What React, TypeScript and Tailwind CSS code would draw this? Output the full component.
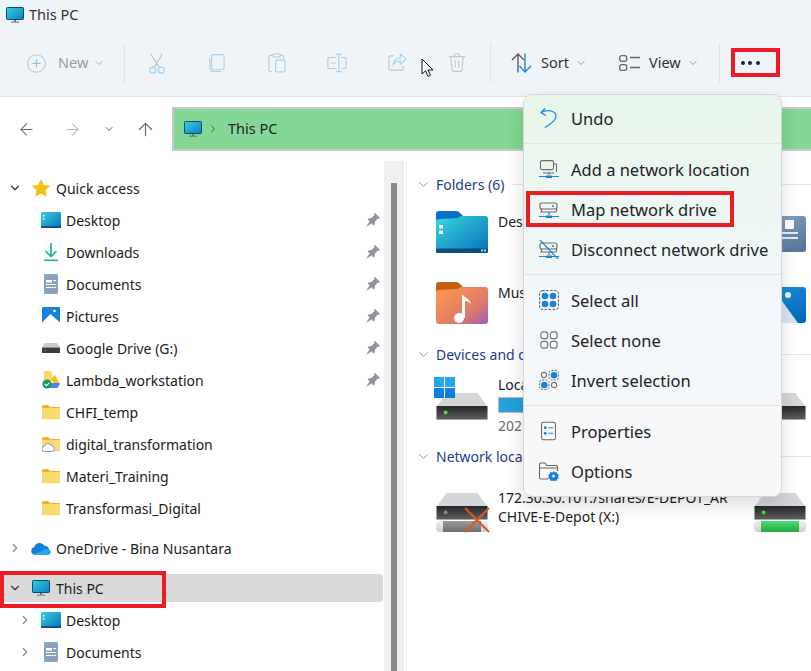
import { ArrowLeft, ArrowRight, ArrowUp, ChevronDown, ChevronRight } from "lucide-react";

function Monitor({ className = "" }: { className?: string }) {
  return (
    <svg viewBox="0 0 18 16" className={className}>
      <defs>
        <linearGradient id="mon" x1="0" y1="0" x2="1" y2="1">
          <stop offset="0" stopColor="#35cfe0" />
          <stop offset="1" stopColor="#0a7fc0" />
        </linearGradient>
      </defs>
      <rect x="0.5" y="0.5" width="17" height="12" rx="0.8" fill="url(#mon)" stroke="#0b4c6e" />
      <rect x="8" y="13" width="2" height="1.6" fill="#5b6b76" />
      <rect x="5" y="14.6" width="8" height="1" fill="#5b6b76" />
    </svg>
  );
}

function DesktopFolder({ className = "" }: { className?: string }) {
  return (
    <svg viewBox="0 0 52 42" className={className}>
      <defs>
        <linearGradient id="deskf" x1="0" y1="0" x2="1" y2="1">
          <stop offset="0" stopColor="#3ad6e0" />
          <stop offset="1" stopColor="#0670b8" />
        </linearGradient>
      </defs>
      <path d="M0 3a3 3 0 0 1 3-3h17a5 5 0 0 1 4 2l3 3v8H0z" fill="#0670c8" />
      <path d="M0 10a3 3 0 0 1 3-2l19-1 3-2h24a3 3 0 0 1 3 3v31a3 3 0 0 1-3 3H3a3 3 0 0 1-3-3z" fill="url(#deskf)" />
      <rect x="0" y="37.5" width="52" height="4.5" rx="1.5" fill="#0c4f78" />
      <rect x="3" y="14" width="4" height="3.5" fill="#e8f8fb" />
      <rect x="3" y="19.5" width="4" height="3.5" fill="#e8f8fb" />
      <rect x="45" y="38.5" width="2" height="2" fill="#b8d8e8" />
      <rect x="48" y="38.5" width="2" height="2" fill="#b8d8e8" />
    </svg>
  );
}

function MusicFolder({ className = "" }: { className?: string }) {
  return (
    <svg viewBox="0 0 52 42" className={className}>
      <defs>
        <linearGradient id="musf" x1="0" y1="0" x2="1" y2="1">
          <stop offset="0" stopColor="#ff9a4a" />
          <stop offset="0.65" stopColor="#df7a68" />
          <stop offset="1" stopColor="#9a62b8" />
        </linearGradient>
      </defs>
      <path d="M0 3a3 3 0 0 1 3-3h17a5 5 0 0 1 4 2l3 3v8H0z" fill="#c06010" />
      <path d="M0 10a3 3 0 0 1 3-2l19-1 3-2h24a3 3 0 0 1 3 3v31a3 3 0 0 1-3 3H3a3 3 0 0 1-3-3z" fill="url(#musf)" />
      <circle cx="23" cy="36" r="5" fill="#fff" />
      <path d="M26 36V12c2 4 8 4 9 10-3-3-5-3-6-3v17z" fill="#fff" />
    </svg>
  );
}

function DocFolder({ className = "" }: { className?: string }) {
  return (
    <svg viewBox="0 0 52 42" className={className}>
      <defs>
        <linearGradient id="docf" x1="0" y1="0" x2="1" y2="1">
          <stop offset="0" stopColor="#9ab3cc" />
          <stop offset="1" stopColor="#4f7096" />
        </linearGradient>
      </defs>
      <rect x="0" y="6" width="52" height="36" rx="3" fill="url(#docf)" />
      <rect x="31" y="10" width="9" height="9" rx="1" fill="#fff" />
      <rect x="28" y="22" width="16" height="2" fill="#e8eef5" />
      <rect x="28" y="27" width="16" height="2" fill="#e8eef5" />
    </svg>
  );
}

function PicFolder({ className = "" }: { className?: string }) {
  return (
    <svg viewBox="0 0 52 42" className={className}>
      <defs>
        <linearGradient id="picf" x1="0" y1="0" x2="1" y2="1">
          <stop offset="0" stopColor="#29a0e4" />
          <stop offset="1" stopColor="#0062b8" />
        </linearGradient>
      </defs>
      <rect x="0" y="6" width="52" height="36" rx="3" fill="url(#picf)" />
      <circle cx="34" cy="14" r="3" fill="#e8f4fb" />
      <path d="M12 42L28 20l16 22z" fill="#d8e4f8" />
    </svg>
  );
}

function BigDrive({ className = "", led = "#3ae23a" }: { className?: string; led?: string }) {
  return (
    <svg viewBox="0 0 54 27" preserveAspectRatio="none" className={className}>
      <defs>
        <linearGradient id="bigd" x1="0" y1="0" x2="0" y2="1">
          <stop offset="0" stopColor="#262626" />
          <stop offset="1" stopColor="#5c5c5c" />
        </linearGradient>
      </defs>
      <path d="M11 0h32l10 13H1z" fill="#d4d6da" />
      <rect x="0.5" y="13" width="53" height="13" fill="url(#bigd)" />
      <rect x="0.5" y="26" width="53" height="1" fill="#a8a8a8" />
      <circle cx="10" cy="19.500" r="2" fill={led} />
    </svg>
  );
}

function WinLocal({ className = "" }: { className?: string }) {
  return (
    <div className={`relative ${className}`}>
      <BigDrive className="absolute left-0 top-[16px] w-[52px] h-[27px]" />
      <svg viewBox="0 0 21 21" className="absolute left-[-2px] top-0 w-[21px] h-[21px]">
        <rect width="10" height="10" fill="#22a6ec" />
        <rect x="11" width="10" height="10" fill="#22a6ec" />
        <rect y="11" width="10" height="10" fill="#0b80dc" />
        <rect x="11" y="11" width="10" height="10" fill="#0b80dc" />
      </svg>
    </div>
  );
}

function NetDrive({ className = "", broken = false }: { className?: string; broken?: boolean }) {
  return (
    <div className={`relative ${className}`}>
      <BigDrive className="absolute left-0 top-0 w-[52px] h-[27px]" led={broken ? "#8a8a8a" : "#3ae23a"} />
      <div className="absolute left-0 top-[28px] h-[11px] w-[52px] rounded-sm bg-gradient-to-b from-[#f0f0f0] to-[#cfcfcf]" />
      <div className={`absolute left-[7px] top-[28px] h-[11px] w-[38px] bg-gradient-to-b ${broken ? "from-[#9a9a9a] to-[#6f6f6f]" : "from-[#4fdc72] to-[#1fa844]"}`} />
      {broken && (
        <svg viewBox="0 0 26 26" className="absolute left-[28px] top-[14px] w-[26px] h-[26px]">
          <path d="M1 1l24 24M25 1L1 25" stroke="#d9562a" strokeWidth="2.2" />
        </svg>
      )}
    </div>
  );
}

function SmallDesktop() {
  return (
    <svg viewBox="0 0 20 16" className="w-[20px] h-[16px]">
      <defs>
        <linearGradient id="sdesk" x1="0" y1="0" x2="1" y2="1">
          <stop offset="0" stopColor="#38d2e0" />
          <stop offset="1" stopColor="#0670b8" />
        </linearGradient>
      </defs>
      <rect width="20" height="16" rx="1.5" fill="url(#sdesk)" />
      <rect y="14.2" width="20" height="1.8" fill="#0c4f78" />
      <rect x="2" y="3" width="1.5" height="1.5" fill="#fff" />
      <rect x="2" y="6" width="1.5" height="1.5" fill="#fff" />
    </svg>
  );
}

function SmallDownload() {
  return (
    <svg viewBox="0 0 20 20" className="w-[20px] h-[20px]">
      <path d="M10 1v13M4.5 9l5.5 5.5L15.5 9" stroke="#1cb597" strokeWidth="1.7" fill="none" />
      <rect x="3" y="17.5" width="14" height="1.6" fill="#1cb597" />
    </svg>
  );
}

function SmallDoc() {
  return (
    <svg viewBox="0 0 20 20" className="w-[20px] h-[20px]">
      <rect x="3" y="0" width="14" height="20" rx="1.2" fill="#8ba3bf" />
      <rect x="5" y="6" width="6" height="2.5" fill="#fff" />
      <rect x="12" y="6" width="3" height="1" fill="#fff" />
      <rect x="5" y="10" width="10" height="1" fill="#fff" />
      <rect x="5" y="13" width="10" height="1" fill="#fff" />
    </svg>
  );
}

function SmallPic() {
  return (
    <svg viewBox="0 0 18 18" className="w-[18px] h-[18px]">
      <rect width="18" height="18" rx="1.2" fill="#1583dc" />
      <circle cx="12.5" cy="4" r="1.3" fill="#fff" />
      <path d="M0 15.5L8.5 7l9.5 8.5V18H0z" fill="#fff" />
    </svg>
  );
}

function SmallDrive() {
  return (
    <svg viewBox="0 0 18 10" className="w-[18px] h-[10px]">
      <path d="M3 0h12l3 4.5H0z" fill="#c9cbce" />
      <rect y="4.5" width="18" height="5.5" fill="#3c3c3c" />
      <rect x="3" y="7" width="1" height="1" fill="#40e040" />
    </svg>
  );
}

function SmallFolder({ cloud = false }: { cloud?: boolean }) {
  return (
    <svg viewBox="0 0 18 16" className="w-[18px] h-[16px]">
      <path d="M0 2a1 1 0 0 1 1-1h5l2 2h9a1 1 0 0 1 1 1v3H0z" fill="#f0b429" />
      <path d="M0 4h18v10.5a.8.8 0 0 1-.8.8H.8a.8.8 0 0 1-.8-.8z" fill="#fcd970" />
      {cloud && (
        <path d="M2.5 15.5a2.5 2.5 0 0 1-.2-5 3.8 3.8 0 0 1 7.2-.7 2.9 2.9 0 0 1 .8 5.7z" fill="#fff" stroke="#6d94d8" strokeWidth="1" />
      )}
    </svg>
  );
}

function SmallLambda() {
  return (
    <svg viewBox="0 0 18 18" className="w-[18px] h-[18px]">
      <path d="M2 0h6l2 2v8H2z" fill="#fcd970" />
      <path d="M9 8l4-4 5 10h-5z" fill="#fbbc04" />
      <path d="M6 17l3-5h9l-2.5 5z" fill="#4285f4" />
      <circle cx="5" cy="13" r="4.6" fill="#1a9b54" />
      <path d="M2.8 13l1.7 1.7 3-3" stroke="#fff" strokeWidth="1.2" fill="none" />
    </svg>
  );
}

function Star() {
  return (
    <svg viewBox="0 0 20 20" className="w-[20px] h-[20px]">
      <path d="M10 1l2.8 6 6.5.8-4.8 4.4 1.3 6.5L10 15.4l-5.8 3.3 1.3-6.5L.7 7.8 7.2 7z" fill="#f9bf11" />
    </svg>
  );
}

function Cloud() {
  return (
    <svg viewBox="0 0 21 13" className="w-[21px] h-[13px]">
      <path d="M4 13a4 4 0 0 1-.6-7.900 6 6 0 0 1 10.800-1.600A4.600 4.600 0 0 1 19 8a2.800 2.800 0 0 1-1 5z" fill="#1480d8" />
      <path d="M4 13h14a2.800 2.800 0 0 0 1.500-5.200c-3-2-7 0-9 2.200-1.800-.6-4.500.6-6.500 3z" fill="#28a8ea" />
    </svg>
  );
}

function Pin() {
  return (
    <svg viewBox="0 0 14 14" className="w-[14px] h-[14px]">
      <path d="M9 0l5 5-1.200 1-1-.4L9 8.400l-.4 3-1 1L1.600 6.400l1-1 3-.4 2.800-2.800-.4-1zM3.500 8.500L0 14l5.500-3.500z" fill="#8d959c" />
    </svg>
  );
}

function Cut() {
  return (
    <svg viewBox="0 0 20 22" className="w-[19px] h-[21px]" fill="none">
      <path d="M3 1l8.500 14M15 1L6.500 15" stroke="#bdbdbd" strokeWidth="1.100" />
      <circle cx="5" cy="18" r="3.200" stroke="#a5d2f3" strokeWidth="1.300" />
      <circle cx="14" cy="18" r="3.200" stroke="#a5d2f3" strokeWidth="1.300" />
    </svg>
  );
}

function Copy() {
  return (
    <svg viewBox="0 0 18 20" className="w-[16px] h-[20px]" fill="none">
      <rect x="3" y="0.600" width="14" height="17" rx="2.400" stroke="#a5d2f3" strokeWidth="1.200" />
      <path d="M1 4v12a3.500 3.500 0 0 0 3.500 3.500h9" stroke="#c4c4c4" strokeWidth="1.200" />
    </svg>
  );
}

function Paste() {
  return (
    <svg viewBox="0 0 19 20" className="w-[18px] h-[20px]" fill="none">
      <path d="M4 19H2.500A1.500 1.500 0 0 1 1 17.500v-14A1.500 1.500 0 0 1 2.500 2H15a1.500 1.500 0 0 1 1.500 1.500V6" stroke="#c4c4c4" strokeWidth="1.200" />
      <rect x="5" y="0.600" width="8" height="3" rx="1.200" stroke="#c4c4c4" strokeWidth="1.100" fill="#eff4f9" />
      <rect x="8" y="7" width="10" height="12.400" rx="1.600" stroke="#a5d2f3" strokeWidth="1.200" />
    </svg>
  );
}

function Rename() {
  return (
    <svg viewBox="0 0 22 20" className="w-[20px] h-[20px]" fill="none">
      <path d="M10 4H2.500A1.500 1.500 0 0 0 1 5.500v9A1.500 1.500 0 0 0 2.500 16H10M16 4h3.500A1.500 1.500 0 0 1 21 5.500v9a1.500 1.500 0 0 1-1.500 1.500H16" stroke="#c4c4c4" strokeWidth="1.200" />
      <path d="M10 0.600h6M13 0.600v18.800M10 19.400h6M4 10h6" stroke="#a5d2f3" strokeWidth="1.300" />
    </svg>
  );
}

function Share() {
  return (
    <svg viewBox="0 0 20 20" className="w-[19px] h-[19px]" fill="none">
      <path d="M6 3H2.500A1.500 1.500 0 0 0 1 4.500v12A1.500 1.500 0 0 0 2.500 18h12a1.500 1.500 0 0 0 1.500-1.500V14" stroke="#c4c4c4" strokeWidth="1.200" />
      <path d="M13 1l6 5.500-6 5.500V8.500c-3.500 0-6 1-7.500 4 .2-4.500 3-7 7.500-7.500z" stroke="#a5d2f3" strokeWidth="1.200" />
    </svg>
  );
}

function Trash() {
  return (
    <svg viewBox="0 0 20 21" className="w-[18px] h-[19px]" fill="none" stroke="#c4c4c4" strokeWidth="1.200">
      <path d="M1 4h18M7 4l1-3h4l1 3M3 4l1.500 15a1.500 1.500 0 0 0 1.500 1.400h8a1.500 1.500 0 0 0 1.500-1.400L17 4M8 8v8M12 8v8" />
    </svg>
  );
}

function Sort() {
  return (
    <svg viewBox="0 0 21 20" className="w-[21px] h-[20px]" fill="none" strokeWidth="1.400">
      <path d="M7 19.500V1M1 7l6-6 6 6" stroke="#5c5c5c" />
      <path d="M14 0.500V19M8.500 13l5.500 6 6-6" stroke="#1f86dc" />
    </svg>
  );
}

function ViewIcon() {
  return (
    <svg viewBox="0 0 21 16" className="w-[21px] h-[16px]" fill="none" stroke="#666" strokeWidth="1.300">
      <rect x="0.700" y="0.700" width="7" height="5.600" rx="2" />
      <rect x="0.700" y="9.700" width="7" height="5.600" rx="2" />
      <path d="M11 2.500h10M11 12.500h10" />
    </svg>
  );
}

function Cursor() {
  return (
    <svg viewBox="0 0 13 20" className="absolute left-[421px] top-[58px] w-[13px] h-[20px]">
      <path d="M1 1v15l3.500-3.200L7 18.500l2.500-1.200L7 12h5z" fill="#fff" stroke="#111" strokeWidth="1" />
    </svg>
  );
}

function NetBase() {
  return <path d="M0 16.500h7M13 16.500h7M10 12v3" stroke="#1f86dc" strokeWidth="1.200" fill="none" />;
}

function MenuIcon({ name }: { name: string }) {
  const gray = "#6b6b6b";
  const blue = "#1a80d8";
  if (name === "undo") {
    return (
      <svg viewBox="0 0 18 20" className="w-[18px] h-[20px]" fill="none" stroke="#2a8ce0" strokeWidth="1.300">
        <path d="M5 0.500L1 4.500l5 3M1 4.500c6-3.500 15-2 15 4 0 3-3 6-11 11" />
      </svg>
    );
  }
  if (name === "add") {
    return (
      <svg viewBox="0 0 20 19" className="w-[20px] h-[19px]" fill="none">
        <rect x="1.500" y="0.600" width="13" height="9" rx="1.500" stroke={gray} strokeWidth="1.100" />
        <path d="M4 13h11M15 4h2.500v8" stroke={gray} strokeWidth="1.100" />
        <NetBase />
        <path d="M7 18h6v-2.500H7z" fill={blue} />
      </svg>
    );
  }
  if (name === "map" || name === "disconnect") {
    return (
      <svg viewBox="0 0 20 19" className="w-[20px] h-[19px]" fill="none">
        <rect x="1" y="3" width="17" height="6" rx="2" stroke={gray} strokeWidth="1.100" />
        <path d="M3 9l-1 3h15l1-3" stroke={gray} strokeWidth="1.100" />
        <circle cx="14" cy="6" r="1" fill={gray} />
        <NetBase />
        <path d="M7 18h6v-2.500H7z" fill={blue} />
        {name === "disconnect" && <path d="M1 0l18 19" stroke={blue} strokeWidth="1.200" />}
      </svg>
    );
  }
  if (name === "all") {
    return (
      <svg viewBox="0 0 20 20" className="w-[20px] h-[20px]" fill="none">
        <rect x="0.600" y="0.600" width="18.800" height="18.800" rx="2.500" stroke="#555" strokeWidth="1" strokeDasharray="2.500 1.500" />
        <circle cx="6" cy="6" r="3.300" fill={blue} />
        <circle cx="14" cy="6" r="3.300" fill={blue} />
        <circle cx="6" cy="14" r="3.300" fill={blue} />
        <circle cx="14" cy="14" r="3.300" fill={blue} />
      </svg>
    );
  }
  if (name === "none") {
    return (
      <svg viewBox="0 0 20 20" className="w-[18px] h-[18px]" fill="none" stroke="#777" strokeWidth="1.300">
        <rect x="1" y="1" width="7.500" height="7.500" rx="2.500" />
        <rect x="11.500" y="1" width="7.500" height="7.500" rx="2.500" />
        <rect x="1" y="11.500" width="7.500" height="7.500" rx="2.500" />
        <rect x="11.500" y="11.500" width="7.500" height="7.500" rx="2.500" />
      </svg>
    );
  }
  if (name === "invert") {
    return (
      <svg viewBox="0 0 20 20" className="w-[20px] h-[20px]" fill="none">
        <rect x="10" y="0.600" width="9.400" height="9.400" rx="2.500" stroke="#555" strokeWidth="0.900" strokeDasharray="2 1.300" />
        <rect x="0.600" y="10" width="9.400" height="9.400" rx="2.500" stroke="#555" strokeWidth="0.900" strokeDasharray="2 1.300" />
        <circle cx="5" cy="5" r="2.600" stroke="#777" strokeWidth="1.100" />
        <circle cx="15" cy="15" r="2.600" stroke="#777" strokeWidth="1.100" />
        <circle cx="15" cy="5.300" r="3.300" fill={blue} />
        <circle cx="5.300" cy="15" r="3.300" fill={blue} />
      </svg>
    );
  }
  if (name === "props") {
    return (
      <svg viewBox="0 0 16 20" className="w-[15px] h-[20px]" fill="none">
        <rect x="0.600" y="0.600" width="14.800" height="18.800" rx="2" stroke="#666" strokeWidth="1.100" />
        <circle cx="4.500" cy="6.500" r="1.500" fill={blue} />
        <circle cx="4.500" cy="12.500" r="1.500" fill={blue} />
        <path d="M8 6.500h5M8 12.500h5" stroke={blue} strokeWidth="1.100" />
      </svg>
    );
  }
  return (
    <svg viewBox="0 0 20 19" className="w-[20px] h-[19px]" fill="none">
      <path d="M9 17H2a1.500 1.500 0 0 1-1.500-1.500v-13A1.500 1.500 0 0 1 2 1h4l2 2.500h9A1.500 1.500 0 0 1 18.500 5v4M1 6h17" stroke="#666" strokeWidth="1.100" />
      <path d="M14.500 9l1.200 1.400 1.900-.3.600 1.800 1.700.9-.9 1.700.9 1.700-1.700.9-.6 1.800-1.900-.3-1.200 1.400-1.200-1.400-1.900.3-.6-1.800-1.700-.9.900-1.700-.9-1.700 1.700-.9.600-1.800 1.900.3z" fill={blue} />
      <circle cx="14.500" cy="14" r="1.500" fill="#eef2f5" />
    </svg>
  );
}

const quick = [
  { label: "Desktop", icon: <SmallDesktop />, pin: true },
  { label: "Downloads", icon: <SmallDownload />, pin: true },
  { label: "Documents", icon: <SmallDoc />, pin: true },
  { label: "Pictures", icon: <SmallPic />, pin: true },
  { label: "Google Drive (G:)", icon: <SmallDrive />, pin: true },
  { label: "Lambda_workstation", icon: <SmallLambda />, pin: true },
  { label: "CHFI_temp", icon: <SmallFolder />, pin: false },
  { label: "digital_transformation", icon: <SmallFolder cloud />, pin: false },
  { label: "Materi_Training", icon: <SmallFolder />, pin: false },
  { label: "Transformasi_Digital", icon: <SmallFolder />, pin: false },
];

function TreeChild({ label, icon, pin, chevron }: { label: string; icon: React.ReactNode; pin?: boolean; chevron?: boolean }) {
  return (
    <div className="flex h-[32px] items-center">
      <div className="flex w-[41px] justify-end pr-[9px]">
        {chevron && <ChevronRight className="h-[14px] w-[14px] text-[#8a8a8a]" strokeWidth={2} />}
      </div>
      <div className="flex w-[20px] justify-center">{icon}</div>
      <span className="ml-[5px] flex-1">{label}</span>
      {pin && <div className="mr-[4px]"><Pin /></div>}
    </div>
  );
}

function TreeRoot({ label, icon, open, selected }: { label: string; icon: React.ReactNode; open?: boolean; selected?: boolean }) {
  return (
    <div className="flex h-[32px] items-center pr-[1px]">
      <div className={`flex h-[28px] flex-1 items-center rounded-[3px] ${selected ? "bg-[#d9d9d9]" : ""}`}>
        <div className="flex w-[31px] justify-center pr-[1px]">
          {open ? (
            <ChevronDown className="h-[14px] w-[14px] text-[#333]" strokeWidth={2} />
          ) : (
            <ChevronRight className="h-[14px] w-[14px] text-[#8a8a8a]" strokeWidth={2} />
          )}
        </div>
        <div className="flex w-[20px] justify-center">{icon}</div>
        <span className="ml-[5px]">{label}</span>
      </div>
    </div>
  );
}

function SectionHead({ label }: { label: string }) {
  return (
    <div className="flex h-[20px] items-center pl-[9px]">
      <ChevronDown className="h-[15px] w-[15px] text-[#8a8a8a]" strokeWidth={1.500} />
      <span className="ml-[5px] text-[#1f3a93]">{label}</span>
      <div className="ml-[8px] h-px flex-1 bg-[#e5e5e5]" />
    </div>
  );
}

function Tile({ icon, children, right }: { icon: React.ReactNode; children: React.ReactNode; right?: React.ReactNode }) {
  return (
    <div className="flex h-[64px] items-start">
      <div className="flex h-full w-[64px] shrink-0 justify-start pl-[29px]">
        <div className="relative h-full w-[54px] shrink-0">{icon}</div>
      </div>
      <div className="ml-[27px] w-[255px] shrink-0">{children}</div>
      <div className="relative ml-[1px] h-full w-[54px] shrink-0">{right}</div>
    </div>
  );
}

const menuGroups = [
  [{ id: "undo", label: "Undo" }],
  [
    { id: "add", label: "Add a network location" },
    { id: "map", label: "Map network drive" },
    { id: "disconnect", label: "Disconnect network drive" },
  ],
  [
    { id: "all", label: "Select all" },
    { id: "none", label: "Select none" },
    { id: "invert", label: "Invert selection" },
  ],
  [
    { id: "props", label: "Properties" },
    { id: "options", label: "Options" },
  ],
];

export default function App() {
  return (
    <div className="relative h-[671px] w-[811px] overflow-hidden bg-white font-['Noto_Sans','Open_Sans',sans-serif] text-[14px] text-[#1b1b1b]">
      <div className="bg-[#eff4f9] text-[14.500px]">
        <div className="flex h-[30px] items-center pl-[6px]">
          <Monitor className="h-[16px] w-[18px]" />
          <span className="ml-[5px] text-[#333]">This PC</span>
        </div>
        <div className="flex h-[67px] items-center border-b border-[#dfe3e8]">
          <div className="flex w-[124px] items-center pl-[27px]">
            <svg viewBox="0 0 20 20" className="h-[19px] w-[19px]" fill="none">
              <circle cx="10" cy="10" r="9.300" stroke="#c0c0c0" strokeWidth="1.100" />
              <path d="M10 5.500v9M5.500 10h9" stroke="#8cc6f0" strokeWidth="1.200" />
            </svg>
            <span className="ml-[12px] text-[#9b9b9b]">New</span>
            <ChevronDown className="ml-[5px] h-[12px] w-[12px] text-[#9b9b9b]" strokeWidth={1.500} />
          </div>
          <div className="h-[40px] w-px bg-[#dfe3e8]" />
          <div className="ml-[2px] flex">
            {[<Cut key="a" />, <Copy key="b" />, <Paste key="c" />, <Rename key="d" />, <Share key="e" />, <Trash key="f" />].map((ic, i) => (
              <div key={i} className="flex w-[60px] justify-center">{ic}</div>
            ))}
          </div>
          <div className="ml-[3px] h-[40px] w-px bg-[#dfe3e8]" />
          <div className="ml-[20px] flex items-center">
            <Sort />
            <span className="ml-[9px] text-[#333]">Sort</span>
            <ChevronDown className="ml-[6px] h-[12px] w-[12px] text-[#777]" strokeWidth={1.500} />
          </div>
          <div className="ml-[32px] flex items-center">
            <ViewIcon />
            <span className="ml-[9px] text-[#333]">View</span>
            <ChevronDown className="ml-[6px] h-[12px] w-[12px] text-[#777]" strokeWidth={1.500} />
          </div>
          <div className="ml-[20px] h-[40px] w-px bg-[#dfe3e8]" />
          <div className="ml-[21px] flex gap-[3.500px]">
            <span className="h-[4px] w-[4px] rounded-full bg-[#222]" />
            <span className="h-[4px] w-[4px] rounded-full bg-[#222]" />
            <span className="h-[4px] w-[4px] rounded-full bg-[#222]" />
          </div>
        </div>
      </div>

      <div className="flex h-[64px] items-center">
        <div className="flex w-[172px] shrink-0 items-center">
          <div className="flex w-[52px] justify-center"><ArrowLeft className="h-[19px] w-[19px] text-[#666]" strokeWidth={1.300} /></div>
          <div className="flex w-[40px] justify-center"><ArrowRight className="h-[19px] w-[19px] text-[#b5b5b5]" strokeWidth={1.300} /></div>
          <div className="flex w-[34px] justify-center"><ChevronDown className="h-[12px] w-[12px] text-[#555]" strokeWidth={1.800} /></div>
          <div className="flex w-[38px] justify-center"><ArrowUp className="h-[21px] w-[21px] text-[#666]" strokeWidth={1.300} /></div>
        </div>
        <div className="flex h-[44px] flex-1 items-center border-y-2 border-l-2 border-[#c9c9c9] bg-[#84d794] pl-[10px] text-[14.500px]">
          <Monitor className="h-[16px] w-[18px]" />
          <ChevronRight className="ml-[5px] h-[12px] w-[12px] text-[#555]" strokeWidth={2} />
          <span className="ml-[9px] text-[#222]">This PC</span>
        </div>
      </div>

      <div className="flex h-[510px]">
        <div className="w-[384px] shrink-0 pt-[11px]">
          <TreeRoot label="Quick access" icon={<Star />} open />
          {quick.map((q) => (
            <TreeChild key={q.label} label={q.label} icon={q.icon} pin={q.pin} />
          ))}
          <div className="mt-[8px]" />
          <TreeRoot label="OneDrive - Bina Nusantara" icon={<Cloud />} />
          <div className="mt-[8px]" />
          <TreeRoot label="This PC" icon={<Monitor className="h-[16px] w-[18px]" />} open selected />
          <TreeChild label="Desktop" icon={<SmallDesktop />} chevron />
          <TreeChild label="Documents" icon={<SmallDoc />} chevron />
        </div>
        <div className="flex w-[20px] shrink-0 flex-col bg-[#f0f0f0] pl-[7px] pt-[22px]">
          <div className="w-[6px] flex-1 bg-[#8a8a8a]" />
        </div>
        <div className="ml-[2px] w-px bg-[#eeeeee]" />
        <div className="flex-1 pt-[13px]">
          <SectionHead label="Folders (6)" />
          <div className="mt-[6px]">
            <Tile icon={<DesktopFolder className="mt-[11px] h-[42px] w-[52px]" />} right={<DocFolder className="mt-[10px] h-[42px] w-[52px]" />}>
              <div className="pt-[12px] leading-[20px]">Des</div>
            </Tile>
            <div className="mt-[7px]">
              <Tile icon={<MusicFolder className="mt-[11px] h-[42px] w-[52px]" />} right={<PicFolder className="mt-[10px] h-[42px] w-[52px]" />}>
                <div className="pt-[12px] leading-[20px]">Mus</div>
              </Tile>
            </div>
          </div>
          <div className="mt-[9px]"><SectionHead label="Devices and d" /></div>
          <div className="mt-[4px]">
            <Tile
              icon={<WinLocal className="mt-[9px] h-[46px] w-[54px]" />}
              right={<BigDrive className="mt-[25px] h-[27px] w-[52px]" />}
            >
              <div className="pt-[7px] leading-[20px]">Loca</div>
              <div className="mt-[2px] h-[16px] w-[200px] border border-[#bcbcbc] bg-[#26a0da]" />
              <div className="mt-[3px] leading-[20px] text-[#6b6b6b]">202</div>
            </Tile>
          </div>
          <div className="mt-[14px]"><SectionHead label="Network loca" /></div>
          <div className="mt-[4px]">
            <Tile icon={<NetDrive broken className="mt-[23px] h-[40px] w-[54px]" />} right={<NetDrive className="mt-[23px] h-[40px] w-[54px]" />}>
              <div className="whitespace-nowrap pt-[18px] leading-[19px]">
                <div>172.30.30.101./shares/E-DEPOT_AR</div>
                <div>CHIVE-E-Depot (X:)</div>
              </div>
            </Tile>
          </div>
        </div>
      </div>

      {/* context menu */}
      <div className="absolute left-[523px] top-[94px] h-[403px] w-[259px] rounded-[9px] border border-[#d6d6d6] bg-gradient-to-b from-[#e8f6ea] via-[#f2f7fb] to-[#f8f8f8] pt-[3px] text-[16.500px] text-[#222] shadow-[0_8px_18px_rgba(0,0,0,0.14)]">
        {menuGroups.map((group, g) => (
          <div key={g}>
            {g > 0 && <div className="my-[5px] h-px bg-[#e0e4e6]" />}
            {group.map((item) => (
              <div key={item.id} className="flex h-[40px] items-center">
                <div className="flex w-[47px] justify-center pl-[2px]"><MenuIcon name={item.id} /></div>
                <span className="pt-[2px]">{item.label}</span>
              </div>
            ))}
          </div>
        ))}
      </div>

      <Cursor />

      {/* red annotations */}
      <div className="absolute left-[731px] top-[48px] h-[29px] w-[49px] border-4 border-[#ed1c24]" />
      <div className="absolute left-[526px] top-[191px] h-[36px] w-[208px] border-4 border-[#ed1c24]" />
      <div className="absolute left-0 top-[571px] h-[37px] w-[166px] border-4 border-[#ed1c24]" />
    </div>
  );
}
